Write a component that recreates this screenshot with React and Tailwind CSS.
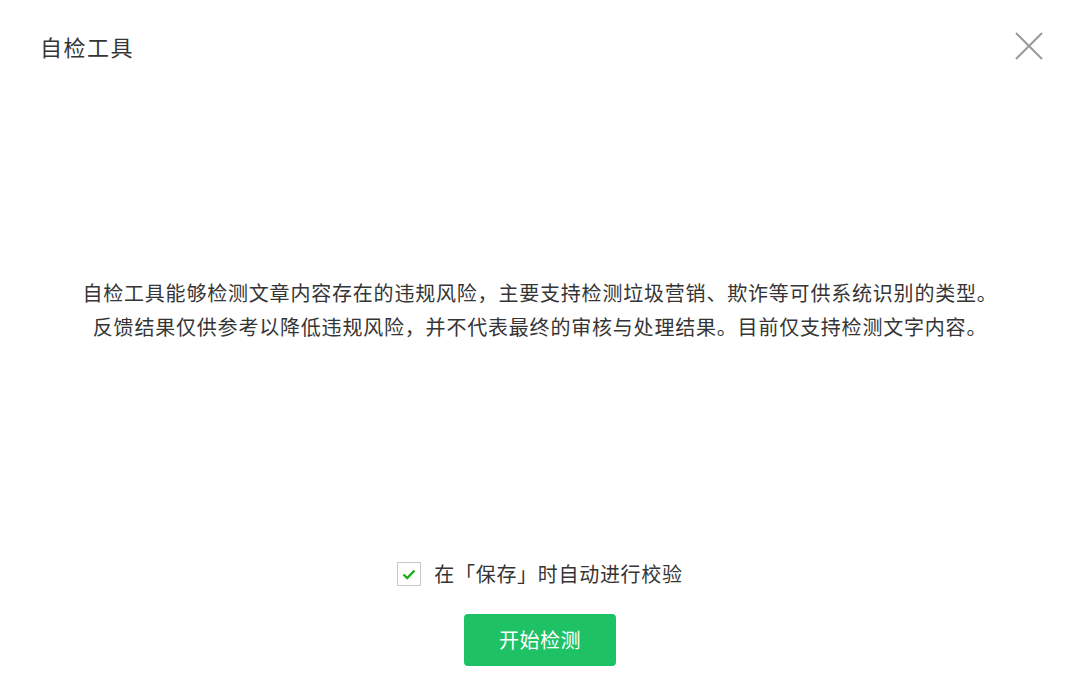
import React, { useState } from 'react'

const CloseIcon = () => (
    <svg width="28" height="28" viewBox="0 0 28 28" fill="none">
        <path d="M1 1L27 27M27 1L1 27" stroke="#9a9a9a" strokeWidth="2" />
    </svg>
)

const App = () => {
    const [autoCheck, setAutoCheck] = useState(true)

    return (
        <div
            className="w-[1080px] h-[684px] bg-white text-[#353535] flex flex-col"
            style={{ fontFamily: '"Noto Sans CJK SC", "Noto Sans", sans-serif' }}
        >
            {/* header */}
            <div className="flex items-center justify-between pt-[30px] pl-[40px] pr-[37px]">
                <h1 className="text-[22px] leading-[32px] tracking-[1.5px]">自检工具</h1>
                <button className="w-[28px] h-[28px] flex items-center justify-center">
                    <CloseIcon />
                </button>
            </div>

            {/* description */}
            <div className="mt-[214px] text-center text-[20px] leading-[34px] tracking-[0.8px]">
                <p>自检工具能够检测文章内容存在的违规风险，主要支持检测垃圾营销、欺诈等可供系统识别的类型。</p>
                <p>反馈结果仅供参考以降低违规风险，并不代表最终的审核与处理结果。目前仅支持检测文字内容。</p>
            </div>

            {/* footer */}
            <div className="mt-[218px] flex flex-col items-center">
                <label className="flex items-center gap-[13px] cursor-pointer" onClick={() => setAutoCheck(!autoCheck)}>
                    <span className="w-[24px] h-[24px] border border-[#c8c8c8] bg-white flex items-center justify-center">
                        {autoCheck && (
                            <svg width="16" height="16" viewBox="0 0 16 16" fill="none">
                                <path d="M2.5 8.5L6.2 12L13.5 4.5" stroke="#1aad19" strokeWidth="2.4" />
                            </svg>
                        )}
                    </span>
                    <span className="text-[20px] leading-[24px] tracking-[0.7px]">在「保存」时自动进行校验</span>
                </label>
                <button className="mt-[28px] w-[152px] h-[52px] rounded-[4px] bg-[#1fc165] text-white text-[20px] tracking-[0.5px]">
                    开始检测
                </button>
            </div>
        </div>
    )
}

export default App
